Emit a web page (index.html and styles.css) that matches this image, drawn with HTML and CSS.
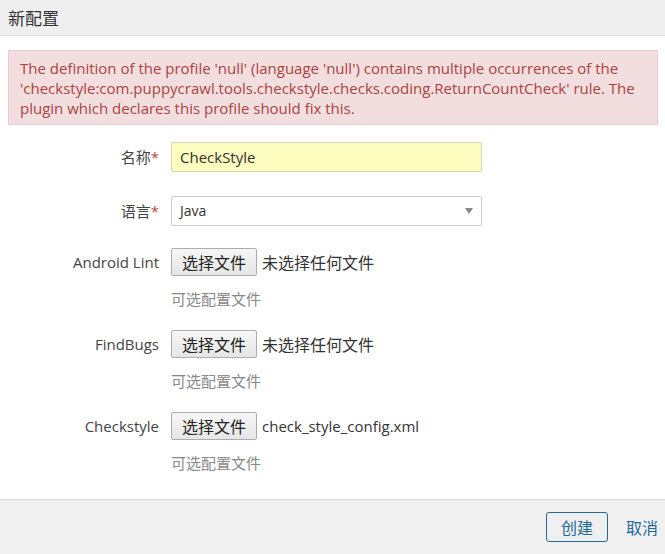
FILE: index.html
```html
<!DOCTYPE html>
<html lang="zh">
<head>
<meta charset="utf-8">
<title>新配置</title>
<link rel="stylesheet" href="styles.css">
</head>
<body>
<div class="modal">
  <div class="modal-header"><h2 class="modal-title">新配置</h2></div>
  <div class="modal-body">
    <div class="alert">The definition of the profile 'null' (language 'null') contains multiple occurrences of the 'checkstyle:com.puppycrawl.tools.checkstyle.checks.coding.ReturnCountCheck' rule. The plugin which declares this profile should fix this.</div>
    <div class="form">
      <div class="group">
        <label class="label">名称<em class="req">*</em></label>
        <div class="control"><div class="input input-filled">CheckStyle</div></div>
      </div>
      <div class="group group-select">
        <label class="label">语言<em class="req">*</em></label>
        <div class="control"><div class="input select"><span>Java</span><span class="caret"></span></div></div>
      </div>
      <div class="group file-group">
        <label class="label">Android Lint</label>
        <div class="control">
          <div class="file"><span class="file-btn">选择文件</span><span class="file-name">未选择任何文件</span></div>
          <div class="help">可选配置文件</div>
        </div>
      </div>
      <div class="group file-group">
        <label class="label">FindBugs</label>
        <div class="control">
          <div class="file"><span class="file-btn">选择文件</span><span class="file-name">未选择任何文件</span></div>
          <div class="help">可选配置文件</div>
        </div>
      </div>
      <div class="group file-group">
        <label class="label">Checkstyle</label>
        <div class="control">
          <div class="file"><span class="file-btn">选择文件</span><span class="file-name file-name-latin">check_style_config.xml</span></div>
          <div class="help">可选配置文件</div>
        </div>
      </div>
    </div>
  </div>
  <div class="modal-footer">
    <button class="btn-create">创建</button>
    <a class="link-cancel">取消</a>
  </div>
</div>
</body>
</html>
```
FILE: styles.css
```css
html, body {
  margin: 0;
  padding: 0;
  background: #fff;
}
body {
  font-family: "Open Sans", "Noto Sans CJK SC", sans-serif;
  font-size: 15px;
  color: #444;
  width: 665px;
  height: 554px;
  overflow: hidden;
}
.modal {
  display: flex;
  flex-direction: column;
  height: 554px;
}
.modal-header {
  height: 36px;
  box-sizing: border-box;
  background: #efefef;
  border-bottom: 1px solid #dcdcdc;
  padding: 0 8px;
  display: flex;
  align-items: center;
}
.modal-title {
  margin: 0;
  font-size: 17px;
  font-weight: normal;
  color: #333;
  font-family: "Noto Sans CJK SC", sans-serif;
}
.modal-body {
  flex: 1;
  padding: 14px 7px 0 8px;
}
.alert {
  background: #f2dede;
  border: 1px solid #ebccd1;
  color: #a94442;
  padding: 7px 11px 6px 11px;
  line-height: 20px;
  font-size: 15px;
}
.form {
  padding-top: 17px;
}
.group {
  display: grid;
  grid-template-columns: 151px 311px;
  column-gap: 12px;
  margin-bottom: 24px;
}
.group-select {
  margin-bottom: 22px;
}
.file-group {
  margin-bottom: 22px;
}
.label {
  text-align: right;
  color: #444;
  line-height: 30px;
}
.file-group .label {
  line-height: 28px;
}
.req {
  font-style: normal;
  color: #b94a48;
}
.input {
  height: 30px;
  box-sizing: border-box;
  border: 1px solid #ccc;
  border-radius: 2px;
  padding: 0 8px;
  line-height: 28px;
  color: #333;
}
.input-filled {
  background: #fcfdbf;
  border-color: #d6d6b0;
}
.select {
  display: flex;
  justify-content: space-between;
  align-items: center;
  font-size: 14px;
}
.caret {
  width: 0;
  height: 0;
  border-left: 4px solid transparent;
  border-right: 4px solid transparent;
  border-top: 6px solid #888;
  margin-right: 0;
}
.file {
  display: flex;
  align-items: center;
  height: 28px;
}
.file-btn {
  height: 28px;
  box-sizing: border-box;
  padding: 0 10px;
  border: 1px solid #adadad;
  border-radius: 2px;
  background: linear-gradient(#f6f6f6, #e6e6e6);
  font-family: "Noto Sans CJK SC", sans-serif;
  color: #222;
  font-size: 16px;
  line-height: 26px;
}
.file-name {
  margin-left: 5px;
  color: #333;
  font-size: 16px;
}
.file-name-latin {
  font-size: 15px;
}
.help {
  margin-top: 14px;
  line-height: 18px;
  font-size: 15px;
  color: #888;
  font-family: "Noto Sans CJK SC", sans-serif;
}
.modal-footer {
  height: 55px;
  box-sizing: border-box;
  background: #f0f0f0;
  border-top: 1px solid #d6d6d6;
  display: flex;
  justify-content: flex-end;
  align-items: center;
  padding: 0 7px 0 0;
  gap: 18px;
}
.btn-create {
  width: 62px;
  height: 30px;
  border: 1px solid #236a97;
  border-radius: 3px;
  background: transparent;
  color: #236a97;
  font-size: 16px;
  font-family: "Noto Sans CJK SC", sans-serif;
  padding: 0;
}
.link-cancel {
  color: #236a97;
  font-size: 16px;
  font-family: "Noto Sans CJK SC", sans-serif;
}
```
